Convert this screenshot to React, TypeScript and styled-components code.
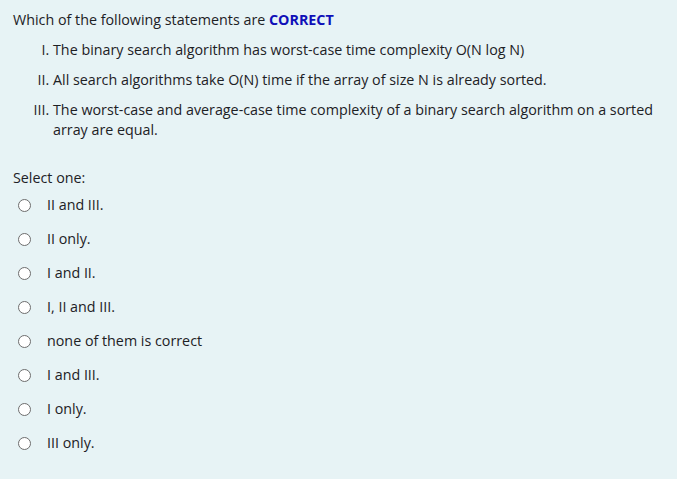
import React from "react";
import styled, { createGlobalStyle } from "styled-components";

const Global = createGlobalStyle`
  html, body { margin: 0; padding: 0; background: #e7f3f5; }
  body { font-family: "Open Sans", "Noto Sans", sans-serif; color: #1d2125; }
`;

const Page = styled.div`
  width: 677px;
  height: 479px;
  box-sizing: border-box;
  padding: 10px 0 0 13px;
  background: #e7f3f5;
  font-size: 14.3px;
  line-height: 20px;
`;

const Question = styled.p`
  margin: 0;
`;

const Strong = styled.strong`
  color: #0f0fb8;
  font-weight: 700;
`;

const Statements = styled.ol`
  list-style: upper-roman;
  margin: 10px 0 0 0;
  padding: 0 0 0 40px;
  width: 615px;
`;

const Statement = styled.li`
  margin-bottom: 10px;
  padding-left: 0;
`;

const Prompt = styled.div`
  margin-top: 28px;
`;

const Options = styled.div`
  display: flex;
  flex-direction: column;
  gap: 14px;
  margin-top: 7px;
  padding-left: 5px;
`;

const Option = styled.label`
  display: flex;
  align-items: center;
  gap: 16px;
  height: 20px;
`;

const Radio = styled.span`
  width: 11px;
  height: 11px;
  border: 1px solid #6d6d6d;
  border-radius: 50%;
  background: #fff;
  flex: none;
`;

const options = [
  "II and III.",
  "II only.",
  "I and II.",
  "I, II and III.",
  "none of them is correct",
  "I and III.",
  "I only.",
  "III only.",
];

export default function App() {
  return (
    <>
      <Global />
      <Page>
        <Question>
          Which of the following statements are <Strong>CORRECT</Strong>
        </Question>
        <Statements>
          <Statement>The binary search algorithm has worst-case time complexity O(N log N)</Statement>
          <Statement>All search algorithms take O(N) time if the array of size N is already sorted.</Statement>
          <Statement>
            The worst-case and average-case time complexity of a binary search algorithm on a sorted array are equal.
          </Statement>
        </Statements>
        <Prompt>Select one:</Prompt>
        <Options>
          {options.map((o) => (
            <Option key={o}>
              <Radio />
              {o}
            </Option>
          ))}
        </Options>
      </Page>
    </>
  );
}
